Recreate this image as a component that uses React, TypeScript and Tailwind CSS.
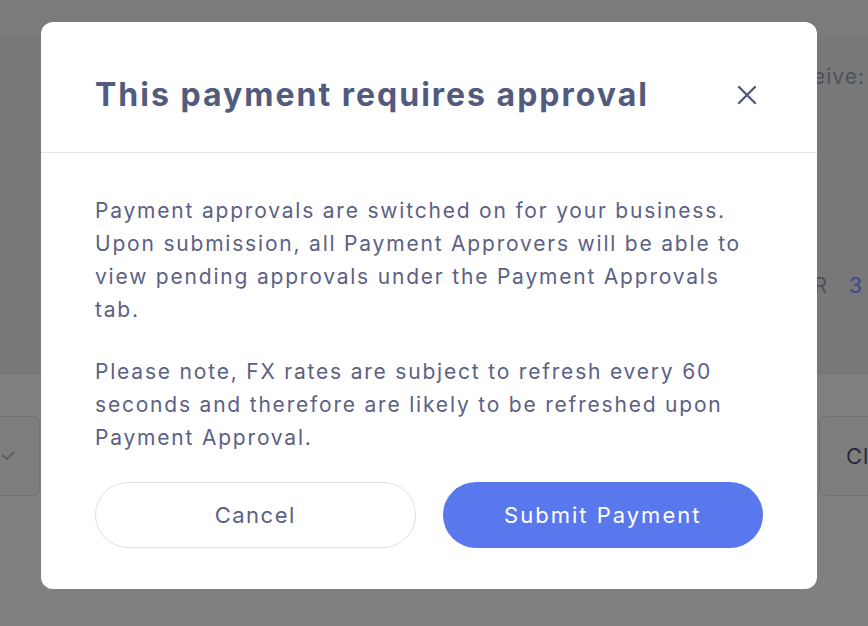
import React from "react";

export default function App() {
  const font = { fontFamily: "Inter, 'Open Sans', sans-serif" };
  return (
    <div className="relative w-[868px] h-[626px] overflow-hidden" style={font}>
      {/* darkened page behind */}
      <div className="flex flex-col w-full h-full">
        <div className="h-[35px] bg-[#7b7b7b]" />
        <div className="h-[340px] bg-[#787878] relative flex flex-col">
          <div className="h-[22px]" />
          <div className="flex justify-end pr-[3px]">
            <span className="text-[21px] text-[#4e525e] leading-[40px] tracking-[1px]">Receive:</span>
          </div>
          <div className="h-[173px]" />
          <div className="flex justify-end gap-[22px] pr-[6px]">
            <span className="text-[21px] text-[#4e525e]">EUR</span>
            <span className="text-[21px] text-[#3c4890]">3</span>
          </div>
        </div>
        <div className="flex-1 bg-[#808080] flex justify-between pt-[41px]">
          <div className="w-[100px] h-[80px] -ml-[60px] border border-[#727272] rounded-[6px] bg-[#7e7e7e] flex items-center justify-end pr-[24px]">
            <svg width="14" height="10" viewBox="0 0 14 10" fill="none" stroke="#5e5e5e" strokeWidth="2">
              <path d="M1 4l5 4 7-7" />
            </svg>
          </div>
          <div className="w-[100px] h-[80px] -mr-[51px] border border-[#727272] rounded-[6px] bg-[#7e7e7e] flex items-center pl-[26px]">
            <span className="text-[22px] text-[#262b40] tracking-[1px]">Close</span>
          </div>
        </div>
      </div>

      {/* modal */}
      <div className="absolute left-[41px] top-[22px] w-[776px] h-[567px] bg-white rounded-[12px] flex flex-col">
        <div className="h-[131px] flex items-center justify-between pt-[15px] pl-[54px] pr-[60px] border-b border-[#e3e4ea]">
          <h1 className="text-[32px] font-bold text-[#525a7e] tracking-[2px]">This payment requires approval</h1>
          <svg width="20" height="20" viewBox="0 0 20 20" fill="none" stroke="#525a7e" strokeWidth="2.4" strokeLinecap="round">
            <path d="M2 2l16 16M18 2L2 18" />
          </svg>
        </div>
        <div className="px-[54px] pt-[41px] text-[21px] leading-[33px] text-[#5b6184] tracking-[1.8px]">
          <p>
            Payment approvals are switched on for your business. Upon submission, all Payment Approvers will be able to view pending approvals under the Payment Approvals tab.
          </p>
          <p className="mt-[29px]">
            Please note, FX rates are subject to refresh every 60 seconds and therefore are likely to be refreshed upon Payment Approval.
          </p>
          <div className="grid grid-cols-2 gap-[27px] mt-[28px]">
            <button className="h-[66px] rounded-full border border-[#dfe0e7] bg-white text-[22px] text-[#5b6184] tracking-[1.5px]">
              Cancel
            </button>
            <button className="h-[66px] rounded-full bg-[#5a78ee] text-[22px] text-white tracking-[2px]">
              Submit Payment
            </button>
          </div>
        </div>
      </div>
    </div>
  );
}
